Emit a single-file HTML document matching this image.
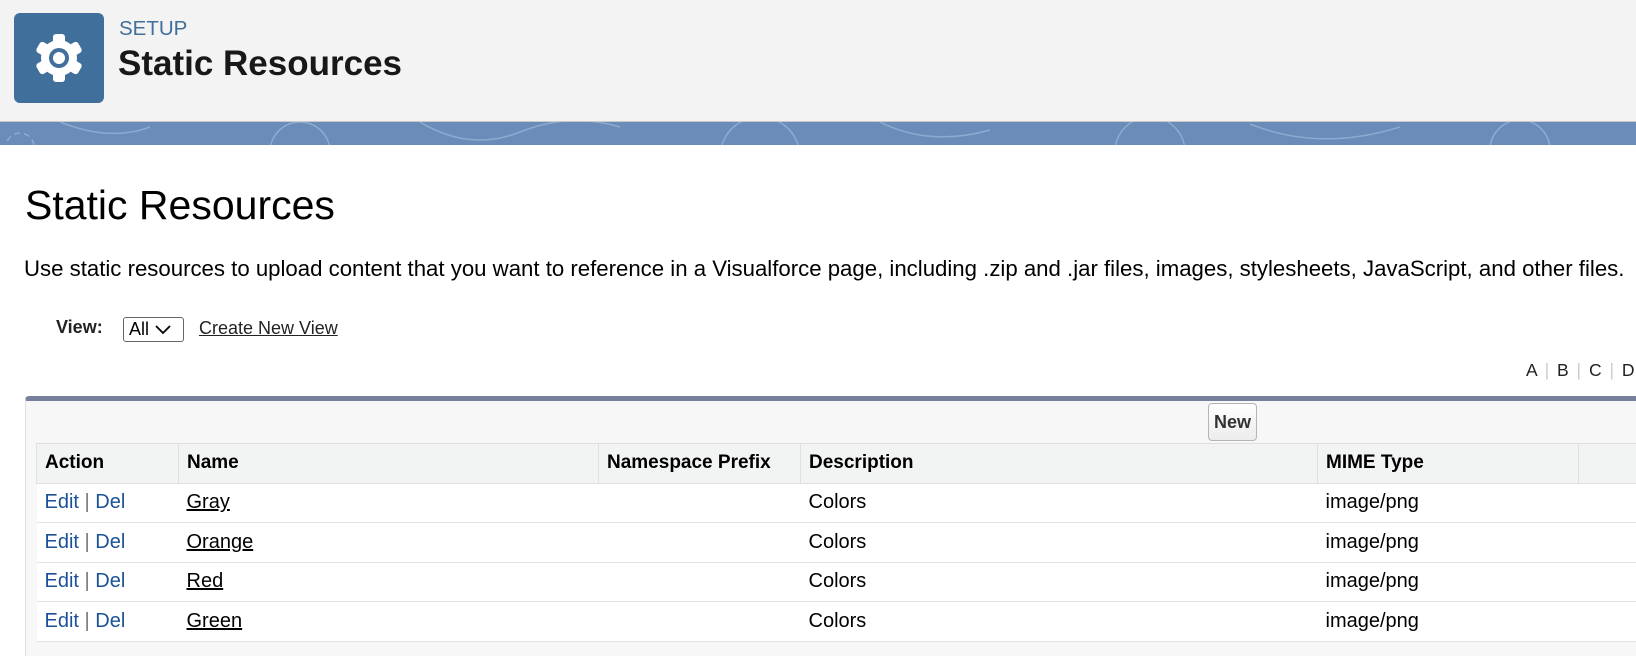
<!DOCTYPE html>
<html><head><meta charset="utf-8"><style>
*{margin:0;padding:0;box-sizing:border-box}
body{width:1636px;height:642px;overflow:hidden;background:#fff;font-family:"Liberation Sans",Arial,sans-serif;color:#000;position:relative}
.a{position:absolute;white-space:nowrap}
.hdr{left:0;top:0;width:1636px;height:122px;background:#f3f3f3;border-bottom:1px solid #c9c9c9}
.ban{left:0;top:122px;width:1636px;height:23px;background:#6b8cb9}
.icon{left:14px;top:13px;width:90px;height:90px;background:#3f6f9a;border-radius:6px}
table{border-collapse:collapse;position:absolute;left:36px;top:443px;width:1620px;font-size:20px;table-layout:fixed}
td,th{height:39.5px;padding:0 8px;text-align:left;border-bottom:1px solid #e3e3e3}
td{background:#fff}
th{background:#f2f3f3;font-weight:bold;font-size:19px;border:1px solid #e0e0e0;border-top:1px solid #dedede}
a{color:#1b5297;text-decoration:none}
u{text-decoration:underline}
</style></head><body>
<div class="a hdr"></div>
<div class="a ban"><svg width="1636" height="23"><g fill="none" stroke="#8eaad0" stroke-width="1.5"><circle cx="20" cy="25" r="14" stroke-dasharray="6 4"/><path d="M60 0 Q110 20 150 5"/><circle cx="300" cy="30" r="30"/><path d="M420 0 Q470 30 520 10 T620 5"/><circle cx="760" cy="35" r="40"/><path d="M880 0 Q930 25 990 8"/><circle cx="1150" cy="30" r="35"/><path d="M1250 2 Q1320 30 1400 5"/><circle cx="1520" cy="28" r="30"/></g></svg></div>
<div class="a icon"><svg width="90" height="90" viewBox="0 0 90 90"><g fill="#fff"><circle cx="45" cy="45" r="18"/><rect x="39" y="21" width="12" height="48" rx="3"/><rect x="39" y="21" width="12" height="48" rx="3" transform="rotate(60 45 45)"/><rect x="39" y="21" width="12" height="48" rx="3" transform="rotate(-60 45 45)"/></g><circle cx="45" cy="45" r="10" fill="#3f6f9a"/><circle cx="45" cy="45" r="6" fill="#fff"/></svg></div>
<div class="a" style="left:119px;top:17px;font-size:20.5px;color:#3f6f9a">SETUP</div>
<div class="a" style="left:118px;top:44px;font-size:35px;font-weight:bold;color:#181818">Static Resources</div>
<div class="a" style="left:25px;top:182px;font-size:41px">Static Resources</div>
<div class="a" style="left:24px;top:256px;font-size:22.2px">Use static resources to upload content that you want to reference in a Visualforce page, including .zip and .jar files, images, stylesheets, JavaScript, and other files.</div>
<div class="a" style="left:56px;top:317px;font-size:18px;font-weight:bold;color:#222">View:</div>
<div class="a" style="left:123px;top:317px;width:61px;height:25px;border:1px solid #666;border-radius:3px;font-size:18px;padding:1px 0 0 5px">All <svg width="16" height="10" style="margin-left:1px" viewBox="0 0 16 10"><path d="M1 1 L8 8 L15 1" fill="none" stroke="#000" stroke-width="1.8"/></svg></div>
<div class="a" style="left:199px;top:318px;font-size:18px;color:#222;text-decoration:underline">Create New View</div>
<div class="a" style="left:1526px;top:360px;font-size:17.5px;color:#222;word-spacing:3px">A <span style="color:#ccc">|</span> B <span style="color:#ccc">|</span> C <span style="color:#ccc">|</span> D</div>
<div class="a" style="left:25px;top:396px;width:1620px;height:260px;background:#f7f7f7;border-top:5px solid #77809a;border-left:1px solid #e0e0e0;border-radius:4px 0 0 0"></div>
<div class="a" style="left:1208px;top:403px;width:49px;height:38px;border:1px solid #b5b5b5;border-radius:4px;background:linear-gradient(#fff,#ececec);font-weight:bold;font-size:18px;color:#333;text-align:center;line-height:36px">New</div>
<table>
<colgroup><col style="width:142px"><col style="width:420px"><col style="width:202px"><col style="width:517px"><col style="width:261px"><col></colgroup>
<tr><th>Action</th><th>Name</th><th>Namespace Prefix</th><th>Description</th><th>MIME Type</th><th></th></tr>
<tr><td><a>Edit</a> <span style="color:#777">|</span> <a>Del</a></td><td><u>Gray</u></td><td></td><td>Colors</td><td>image/png</td><td></td></tr>
<tr><td><a>Edit</a> <span style="color:#777">|</span> <a>Del</a></td><td><u>Orange</u></td><td></td><td>Colors</td><td>image/png</td><td></td></tr>
<tr><td><a>Edit</a> <span style="color:#777">|</span> <a>Del</a></td><td><u>Red</u></td><td></td><td>Colors</td><td>image/png</td><td></td></tr>
<tr><td><a>Edit</a> <span style="color:#777">|</span> <a>Del</a></td><td><u>Green</u></td><td></td><td>Colors</td><td>image/png</td><td></td></tr>
</table>
</body></html>
